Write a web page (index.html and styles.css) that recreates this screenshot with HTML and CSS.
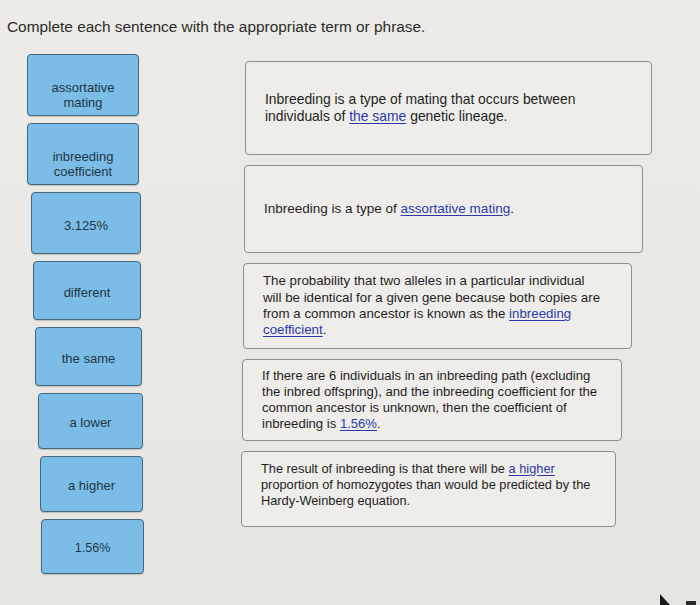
FILE: index.html
```html
<!DOCTYPE html>
<html lang="en">
<head>
<meta charset="utf-8">
<title>Complete each sentence</title>
<link rel="stylesheet" href="styles.css">
</head>
<body>
<div class="page">
  <h1 class="title">Complete each sentence with the appropriate term or phrase.</h1>
  <div class="board">
    <div class="terms">
      <div class="card"><span>assortative<br>mating</span></div>
      <div class="card"><span>inbreeding<br>coefficient</span></div>
      <div class="card"><span>3.125%</span></div>
      <div class="card"><span>different</span></div>
      <div class="card"><span>the same</span></div>
      <div class="card"><span>a lower</span></div>
      <div class="card"><span>a higher</span></div>
      <div class="card"><span>1.56%</span></div>
    </div>
    <div class="sentences">
      <div class="sentence s1"><p class="text">Inbreeding is a type of mating that occurs between<br>individuals of <span class="ans">the same</span> genetic lineage.</p></div>
      <div class="sentence s2"><p class="text">Inbreeding is a type of <span class="ans">assortative mating</span>.</p></div>
      <div class="sentence s3"><p class="text">The probability that two alleles in a particular individual<br>will be identical for a given gene because both copies are<br>from a common ancestor is known as the <span class="ans">inbreeding<br>coefficient</span>.</p></div>
      <div class="sentence s4"><p class="text">If there are 6 individuals in an inbreeding path (excluding<br>the inbred offspring), and the inbreeding coefficient for the<br>common ancestor is unknown, then the coefficient of<br>inbreeding is <span class="ans">1.56%</span>.</p></div>
      <div class="sentence s5"><p class="text">The result of inbreeding is that there will be <span class="ans">a higher</span><br>proportion of homozygotes than would be predicted by the<br>Hardy-Weinberg equation.</p></div>
    </div>
  </div>
  <svg class="cursor" width="40" height="12" viewBox="0 0 40 12" aria-hidden="true">
    <path d="M2 1 L2 12 L12 12 Z" fill="#1a1a1a"/>
    <path d="M28 8 L38 8 L38 12 L28 12 Z" fill="#2a2a2a"/>
  </svg>
</div>
</body>
</html>
```

FILE: styles.css
```css
* { box-sizing: border-box; }

html, body {
  margin: 0;
  padding: 0;
}

body {
  background: #eae8e4;
  font-family: "Liberation Sans", Arial, Helvetica, sans-serif;
  color: #262626;
}

.page {
  position: relative;
  width: 700px;
  height: 605px;
  overflow: hidden;
  background: linear-gradient(180deg, #ecebe7 0%, #e9e8e4 60%, #e6e5e1 100%);
}

.title {
  margin: 0;
  padding: 18px 0 0 7px;
  font-size: 15.4px;
  line-height: 18px;
  font-weight: normal;
  color: #2b2b2b;
}

.board {
  display: flex;
  align-items: flex-start;
  margin-top: 18px;
  padding-left: 27px;
}

/* term cards */
.terms {
  display: flex;
  flex-direction: column;
  gap: 7px;
  width: 117px;
}

.card {
  width: 112px;
  height: 62px;
  display: flex;
  align-items: flex-start;
  justify-content: center;
  padding-top: 25px;
  text-align: center;
  background: #7bbde7;
  border: 1.5px solid #45687f;
  border-radius: 4px;
  box-shadow: 0 1px 1px rgba(0, 0, 0, 0.18);
  font-size: 13px;
  line-height: 15px;
  color: #1e3546;
}

.card:nth-child(3) { margin-left: 4px; width: 110px; }
.card:nth-child(4) { margin-left: 6px; width: 108px; height: 59px; padding-top: 23px; }
.card:nth-child(5) { margin-left: 8px; width: 107px; height: 59px; padding-top: 23px; }
.card:nth-child(6) { margin-left: 11px; width: 105px; height: 56px; padding-top: 21px; }
.card:nth-child(7) { margin-left: 13px; width: 103px; height: 56px; padding-top: 21px; }
.card:nth-child(8) { margin-left: 14px; width: 103px; height: 55px; padding-top: 21px; font-size: 12.6px; }

/* sentence drop zones */
.sentences {
  display: flex;
  flex-direction: column;
  gap: 10px;
  margin-left: 97px;
  margin-top: 7px;
}

.sentence {
  display: flex;
  align-items: center;
  padding: 0 8px 0 19px;
  background: #eeede9;
  border: 1px solid #8f8f8d;
  border-radius: 4px;
  color: #1f1f1f;
}

.text {
  margin: 0;
  white-space: nowrap;
}

.s1 { height: 94px; width: 407px; margin-left: 4px; font-size: 13.9px; line-height: 17px; }
.s2 { height: 88px; width: 399px; margin-left: 3px; font-size: 13.5px; line-height: 16.5px; }
.s3 { height: 86px; width: 389px; margin-left: 2px; font-size: 13.3px; line-height: 16.3px; }
.s4 { height: 82px; width: 380px; margin-left: 1px; font-size: 13.1px; line-height: 16px; }
.s5 {
  height: 76px;
  width: 375px;
  align-items: flex-start;
  padding-top: 9px;
  font-size: 12.8px;
  line-height: 16px;
}

.ans {
  color: #2c3aa8;
  text-decoration: underline;
  text-decoration-color: #2c3aa8;
  text-underline-offset: 2px;
}

.cursor {
  position: absolute;
  left: 658px;
  bottom: 0;
}
```
